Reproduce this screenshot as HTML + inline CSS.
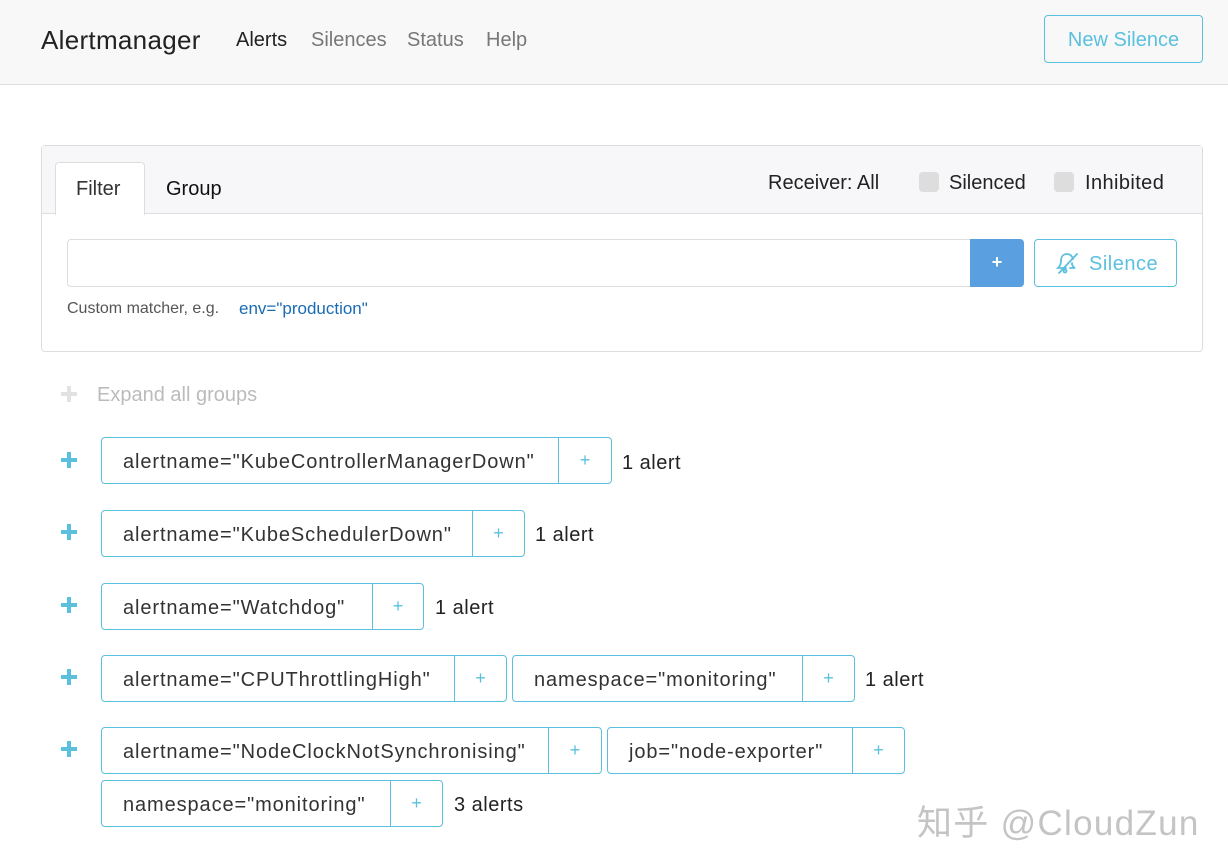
<!DOCTYPE html>
<html><head><meta charset="utf-8"><style>
*{box-sizing:border-box;margin:0;padding:0}
body{width:1228px;height:863px;background:#fff;font-family:"Liberation Sans","Noto Sans CJK SC",sans-serif;color:#212529;position:relative;overflow:hidden}
.a{position:absolute;white-space:nowrap}
.hdr{left:0;top:0;width:1228px;height:85px;background:#f8f8f8;border-bottom:1px solid #ddd}
.tag{position:absolute;border:1px solid #5bc0de;border-radius:4px;height:47px;display:flex;align-items:center;font-size:20px;color:#333}
.tag .t{height:100%;display:flex;align-items:center;padding-left:21px;padding-top:3px;border-right:1px solid #5bc0de;letter-spacing:0.9px}
.tag .p{flex:1;text-align:center;color:#5bc0de;font-size:18px}
.cnt{position:absolute;font-size:20px;color:#222;letter-spacing:0.5px}
.pl{position:absolute;left:61px;width:16px;height:16px}
.pl:before,.pl:after{content:"";position:absolute;background:#5bc0de}
.pl:before{left:6px;top:0;width:4px;height:16px}
.pl:after{left:0;top:6px;width:16px;height:4px}
</style></head><body>
<div class="a hdr"></div>
<div class="a" style="left:41px;top:25px;font-size:26px;color:#222;letter-spacing:0.3px">Alertmanager</div>
<div class="a" style="left:236px;top:29px;font-size:20px;color:#222">Alerts</div>
<div class="a" style="left:311px;top:29px;font-size:20px;color:#777">Silences</div>
<div class="a" style="left:407px;top:29px;font-size:20px;color:#777">Status</div>
<div class="a" style="left:486px;top:29px;font-size:20px;color:#777">Help</div>
<div class="a" style="left:1044px;top:15px;width:159px;height:48px;border:1px solid #5bc0de;border-radius:4px;color:#5bc0de;font-size:20px;text-align:center;line-height:48px">New Silence</div>

<div class="a" style="left:41px;top:145px;width:1162px;height:207px;border:1px solid #ddd;border-radius:4px"></div>
<div class="a" style="left:42px;top:146px;width:1160px;height:68px;background:#f7f7f9;border-bottom:1px solid #ddd"></div>
<div class="a" style="left:55px;top:162px;width:90px;height:53px;background:#fff;border:1px solid #ddd;border-bottom:none;border-radius:4px 4px 0 0"></div>
<div class="a" style="left:76px;top:178px;font-size:20px;color:#333">Filter</div>
<div class="a" style="left:166px;top:178px;font-size:20px;color:#111">Group</div>
<div class="a" style="left:768px;top:172px;font-size:20px;color:#222">Receiver: All</div>
<div class="a" style="left:919px;top:172px;width:20px;height:20px;background:#ddd;border-radius:4px"></div>
<div class="a" style="left:949px;top:172px;font-size:20px;color:#222">Silenced</div>
<div class="a" style="left:1054px;top:172px;width:20px;height:20px;background:#ddd;border-radius:4px"></div>
<div class="a" style="left:1085px;top:172px;font-size:20px;color:#222;letter-spacing:0.4px">Inhibited</div>
<div class="a" style="left:67px;top:239px;width:904px;height:48px;border:1px solid #ddd;border-radius:4px 0 0 4px"></div>
<div class="a" style="left:970px;top:239px;width:54px;height:48px;background:#5a9fe0;border-radius:0 4px 4px 0;color:#fff;text-align:center;line-height:46px;font-size:18px;font-weight:bold">+</div>
<div class="a" style="left:1034px;top:239px;width:143px;height:48px;border:1px solid #5bc0de;border-radius:4px;color:#5bc0de;font-size:20px;line-height:48px;padding-left:54px;letter-spacing:0.5px">Silence</div>
<svg class="a" style="left:1055px;top:251px" width="24" height="24" viewBox="0 0 24 24" fill="none" stroke="#5bc0de" stroke-width="1.8" stroke-linecap="round"><path d="M4 22L22 3"/><path d="M18 8c-1-3-3-5-6-5-4 0-6 3-6 7 0 4-2 6-3 7h8"/><path d="M17 12c0 2 1 4 3 5h-5"/><circle cx="10" cy="20" r="1.5"/></svg>
<div class="a" style="left:67px;top:300px;font-size:16px;color:#555">Custom matcher, e.g.</div>
<div class="a" style="left:239px;top:299px;font-size:17px;color:#1a6bb5">env="production"</div>

<div class="pl" style="top:386px;opacity:.35;filter:grayscale(1)"></div>
<div class="a" style="left:97px;top:384px;font-size:20px;color:#bbb">Expand all groups</div>

<div class="pl" style="top:452px"></div>
<div class="tag" style="left:101px;top:437px;width:511px"><div class="t" style="width:457px">alertname="KubeControllerManagerDown"</div><div class="p">+</div></div>
<div class="cnt" style="left:622px;top:452px">1 alert</div>

<div class="pl" style="top:524px"></div>
<div class="tag" style="left:101px;top:510px;width:424px"><div class="t" style="width:371px">alertname="KubeSchedulerDown"</div><div class="p">+</div></div>
<div class="cnt" style="left:535px;top:524px">1 alert</div>

<div class="pl" style="top:597px"></div>
<div class="tag" style="left:101px;top:583px;width:323px"><div class="t" style="width:271px">alertname="Watchdog"</div><div class="p">+</div></div>
<div class="cnt" style="left:435px;top:597px">1 alert</div>

<div class="pl" style="top:669px"></div>
<div class="tag" style="left:101px;top:655px;width:406px"><div class="t" style="width:353px">alertname="CPUThrottlingHigh"</div><div class="p">+</div></div>
<div class="tag" style="left:512px;top:655px;width:343px"><div class="t" style="width:290px">namespace="monitoring"</div><div class="p">+</div></div>
<div class="cnt" style="left:865px;top:669px">1 alert</div>

<div class="pl" style="top:741px"></div>
<div class="tag" style="left:101px;top:727px;width:501px"><div class="t" style="width:447px">alertname="NodeClockNotSynchronising"</div><div class="p">+</div></div>
<div class="tag" style="left:607px;top:727px;width:298px"><div class="t" style="width:245px">job="node-exporter"</div><div class="p">+</div></div>
<div class="tag" style="left:101px;top:780px;width:342px"><div class="t" style="width:289px">namespace="monitoring"</div><div class="p">+</div></div>
<div class="cnt" style="left:454px;top:794px">3 alerts</div>

<div class="a" style="left:917px;top:795px;font-size:35px;color:#c4c4c4;letter-spacing:1.3px">知乎 @CloudZun</div>
</body></html>
